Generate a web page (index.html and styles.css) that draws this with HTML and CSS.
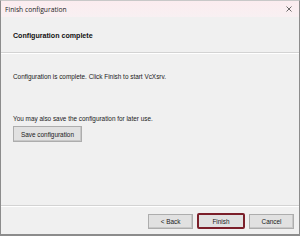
FILE: index.html
```html
<!DOCTYPE html>
<html>
<head>
<meta charset="utf-8">
<link rel="stylesheet" href="styles.css">
</head>
<body>
<div class="window">
  <div class="titlebar">
    <span class="title">Finish configuration</span>
    <svg class="close" width="6" height="6" viewBox="0 0 6 6"><path d="M0.5 0.5 L5.5 5.5 M5.5 0.5 L0.5 5.5" stroke="#444" stroke-width="0.8" fill="none"/></svg>
  </div>
  <div class="header">
    <span class="heading">Configuration complete</span>
  </div>
  <div class="sep"></div>
  <div class="content">
    <p class="line first">Configuration is complete. Click Finish to start VcXsrv.</p>
    <p class="line second">You may also save the configuration for later use.</p>
    <button class="btn save">Save configuration</button>
  </div>
  <div class="sep"></div>
  <div class="footer">
    <button class="btn back">&lt; Back</button>
    <button class="btn finish">Finish</button>
    <button class="btn cancel">Cancel</button>
  </div>
</div>
</body>
</html>
```
FILE: styles.css
```css
html, body {
  margin: 0;
  padding: 0;
  background: #f0f0f0;
}
.window {
  width: 300px;
  height: 236px;
  box-sizing: border-box;
  border-left: 1px solid #8c8c8c;
  border-right: 1px solid #8c8c8c;
  border-bottom: 2px solid #8c8c8c;
  border-top: 1px solid #c8c8c8;
  background: #f0f0f0;
  display: flex;
  flex-direction: column;
  font-family: "Liberation Sans", Arial, sans-serif;
  color: #1a1a1a;
  overflow: hidden;
}
.titlebar {
  height: 16px;
  flex: none;
  background: linear-gradient(#fbecef, #f8f0f2);
  display: flex;
  align-items: center;
  justify-content: space-between;
  padding: 0 7px 0 4px;
}
.title {
  font-family: "Open Sans", "Liberation Sans", sans-serif;
  font-size: 6.7px;
  color: #222;
}
.close {
  width: 6px;
  height: 6px;
}
.header {
  height: 35px;
  flex: none;
  box-sizing: border-box;
  padding: 7px 0 0 12px;
  background: #f0f0f0;
}
.heading {
  font-size: 7.1px;
  font-weight: bold;
  color: #111;
}
.sep {
  flex: none;
  height: 1px;
  background: #d3d3d3;
  border-bottom: 1px solid #ffffff;
}
.content {
  flex: 1;
  padding: 19px 0 0 12px;
  display: flex;
  flex-direction: column;
  align-items: flex-start;
}
.line {
  margin: 0;
  font-size: 6.4px;
  line-height: 8px;
  color: #1a1a1a;
}
.second {
  margin-top: 34px;
}
.btn {
  font-family: "Liberation Sans", Arial, sans-serif;
  font-size: 6.4px;
  color: #1a1a1a;
  background: #e1e1e1;
  border: 1px solid #adadad;
  border-radius: 0;
  padding: 0;
  height: 16px;
  box-sizing: border-box;
  box-shadow: inset -1px -1px 0 #c8c8c8;
}
.save {
  margin-top: 3px;
  width: 69px;
}
.footer {
  flex: none;
  height: 27px;
  box-sizing: border-box;
  display: flex;
  justify-content: flex-end;
  align-items: flex-start;
  padding: 7px 5px 0 0;
  gap: 4px;
}
.back, .cancel {
  width: 45px;
  height: 15px;
}
.finish {
  width: 48px;
  height: 16px;
  margin-top: -1px;
  border: 2px solid #7b1f2a;
  border-radius: 2px;
  box-shadow: none;
}
```
